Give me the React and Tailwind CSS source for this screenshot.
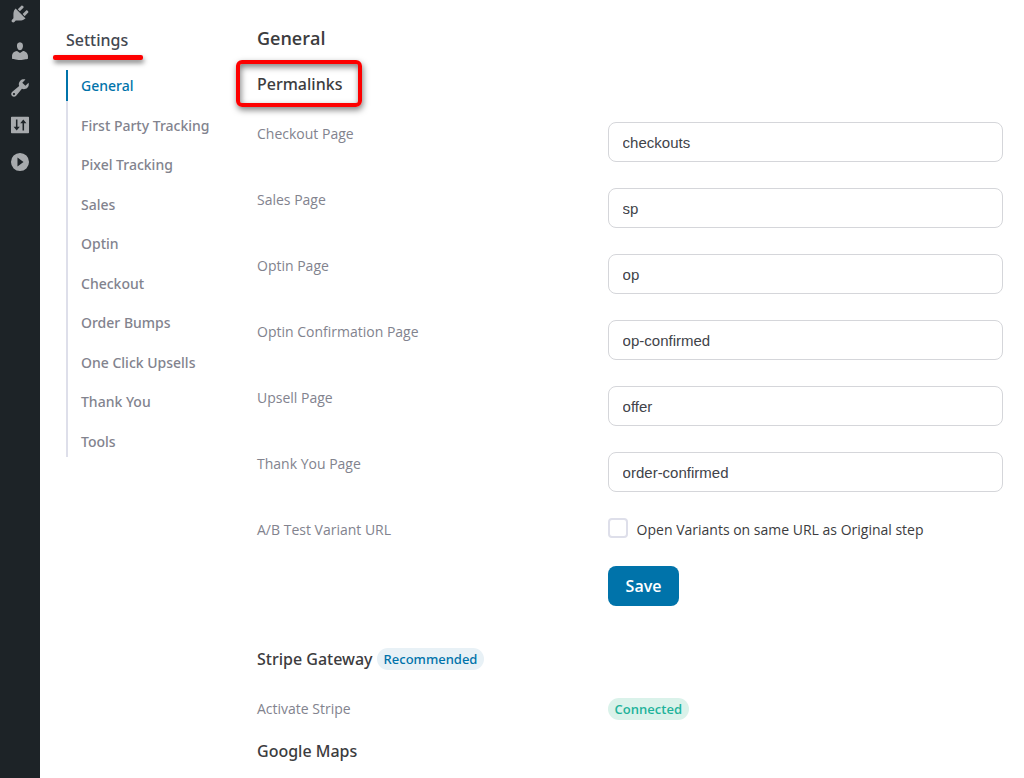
import React, { useState } from 'react';

const ADMIN_MENU = [
  { id: 'plugins', label: 'Plugins', path: 'M13.11 4.36L9.87 7.6 8 5.73l3.24-3.24c.35-.34 1.05-.2 1.56.32.52.51.66 1.21.31 1.55zm-8 1.77l.91-1.12 9.01 9.01-1.19.84c-.71.71-2.63 1.16-3.82 1.16H6.14L4.9 17.26c-.59.59-1.54.59-2.12 0-.59-.58-.59-1.53 0-2.12l1.24-1.24v-3.88c0-1.13.4-3.19 1.09-3.89zm7.26 3.97l3.24-3.24c.34-.35 1.04-.21 1.55.31.52.51.66 1.21.31 1.55l-3.24 3.25z' },
  { id: 'users', label: 'Users', path: 'M10 9.25c-2.27 0-2.73-3.44-2.73-3.44C7 4.02 7.82 2 9.97 2c2.16 0 2.98 2.02 2.71 3.81 0 0-.41 3.44-2.68 3.44zM7.280 10L10 11.820 12.720 10c2.39 0 4.52 2.33 4.52 4.53v2.49s-3.65 1.13-7.24 1.13c-3.65 0-7.24-1.13-7.24-1.13v-2.49c0-2.25 1.94-4.48 4.52-4.53z' },
  { id: 'tools', label: 'Tools', path: 'M16.68 9.77c-1.34 1.34-3.3 1.67-4.95.99l-5.41 6.52c-.99.99-2.59.99-3.58 0s-.99-2.59 0-3.57l6.52-5.42c-.68-1.65-.35-3.61.99-4.95 1.28-1.28 3.12-1.62 4.72-1.06l-2.89 2.89 2.82 2.82 2.86-2.87c.53 1.58.18 3.39-1.08 4.65zM3.81 16.21c.4.39 1.04.39 1.43 0 .4-.4.4-1.04 0-1.43-.39-.4-1.03-.4-1.43 0-.39.39-.39 1.03 0 1.43z' },
  { id: 'settings', label: 'Settings', path: 'M2.5 2.5h15a.7.7 0 0 1 .7.7v13.600a.7.7 0 0 1-.7.7h-15a.7.7 0 0 1-.7-.7V3.200a.7.7 0 0 1 .7-.7zM6.300 5v6.500H4.200L7 15l2.800-3.500H7.700V5zM12.300 15V8.500h-2.100L13 5l2.800 3.500h-2.100V15z' },
  { id: 'collapse', label: 'Collapse menu', path: 'M10 1.8a8.2 8.2 0 1 1 0 16.4 8.2 8.2 0 0 1 0-16.4zM7.7 6v8l5.5-4z' }
];

const TABS = [
  'General',
  'First Party Tracking',
  'Pixel Tracking',
  'Sales',
  'Optin',
  'Checkout',
  'Order Bumps',
  'One Click Upsells',
  'Thank You',
  'Tools'
];

const PERMALINKS = [
  { id: 'checkout', label: 'Checkout Page', value: 'checkouts' },
  { id: 'sales', label: 'Sales Page', value: 'sp' },
  { id: 'optin', label: 'Optin Page', value: 'op' },
  { id: 'optin-confirmation', label: 'Optin Confirmation Page', value: 'op-confirmed' },
  { id: 'upsell', label: 'Upsell Page', value: 'offer' },
  { id: 'thank-you', label: 'Thank You Page', value: 'order-confirmed' }
];

const AdminMenu = () => (
  <nav aria-label="Admin menu" className="w-10 shrink-0 bg-[#1d2327] pt-[3px]">
    <ul className="flex flex-col items-center gap-[15px]">
      {ADMIN_MENU.map(item => (
        <li key={item.id}>
          <a href={`#${item.id}`} aria-label={item.label} className="block text-[#a7aaad]">
            <svg viewBox="0 0 20 20" fill="currentColor" fillRule="evenodd" className="size-[22px]">
              <path d={item.path} />
            </svg>
          </a>
        </li>
      ))}
    </ul>
  </nav>
);

const SettingsTabs = ({ active, onSelect }) => (
  <aside className="w-[217px] shrink-0 pl-[26px] pt-7 font-['Noto_Sans',sans-serif]">
    <h2 className="relative w-fit text-base leading-6 font-medium text-[#434750]">
      Settings
      <span className="absolute top-[27px] -left-[13px] h-[5px] w-[90px] rounded-xs bg-[#fd0000] shadow-[1px_3px_5px_rgba(0,0,0,0.5)]" />
    </h2>
    <ul className="mt-[18px] flex h-[387px] flex-col justify-between border-l-2 border-[#dedfea]">
      {TABS.map(tab => (
        <li key={tab}>
          <a
            href="#settings"
            aria-current={tab === active ? 'page' : undefined}
            onClick={() => onSelect(tab)}
            className={`-ml-0.5 block border-l-2 pl-[13px] text-sm leading-[31px] font-medium ${
              tab === active ? 'border-[#0073aa] text-[#0073aa]' : 'border-transparent text-[#82838e]'
            }`}
          >
            {tab}
          </a>
        </li>
      ))}
    </ul>
  </aside>
);

const Row = ({ label, htmlFor, children }) => (
  <div className="grid grid-cols-[47fr_53fr] items-start">
    {htmlFor ? (
      <label htmlFor={htmlFor} className="text-sm leading-6 text-[#82838e]">{label}</label>
    ) : (
      <span className="text-sm leading-6 text-[#82838e]">{label}</span>
    )}
    {children}
  </div>
);

const App = () => {
  const [active, setActive] = useState('General');
  const [slugs, setSlugs] = useState(() => Object.fromEntries(PERMALINKS.map(p => [p.id, p.value])));
  const [sameUrl, setSameUrl] = useState(false);

  return (
    <div className="flex min-h-screen bg-white font-['Open_Sans',sans-serif] text-[#3c3c3e]">
      <AdminMenu />
      <SettingsTabs active={active} onSelect={setActive} />

      <main className="min-w-0 flex-1 pt-[26px] pr-[21px]">
        <h1 className="text-lg leading-6 font-semibold">General</h1>

        <form onSubmit={e => e.preventDefault()}>
          <h2 className="relative mt-[22px] w-fit font-['Noto_Sans',sans-serif] text-base leading-6 font-medium">
            Permalinks
            <span className="absolute -top-3 -left-[21px] h-[47px] w-[126px] rounded-md border-4 border-[#fd0000] shadow-[1px_3px_6px_rgba(0,0,0,0.5),inset_1px_3px_6px_rgba(0,0,0,0.5)]" />
          </h2>

          <div className="mt-[26px] flex flex-col gap-[26px]">
            {PERMALINKS.map(({ id, label }) => (
              <Row key={id} label={label} htmlFor={id}>
                <input
                  id={id}
                  type="text"
                  value={slugs[id]}
                  onChange={e => setSlugs({ ...slugs, [id]: e.target.value })}
                  className="h-10 w-full rounded-lg border border-[#d5d6da] px-[14px] font-['Liberation_Sans',sans-serif] text-[15px] text-[#414349]"
                />
              </Row>
            ))}
            <Row label="A/B Test Variant URL">
              <label className="flex items-start gap-[9px] text-sm leading-6">
                <input
                  type="checkbox"
                  checked={sameUrl}
                  onChange={e => setSameUrl(e.target.checked)}
                  className="size-5 appearance-none rounded border-2 border-[#dedfea] checked:bg-[#0073aa]"
                />
                Open Variants on same URL as Original step
              </label>
            </Row>
          </div>

          <div className="mt-6 grid grid-cols-[47fr_53fr]">
            <button type="submit" className="col-start-2 h-10 w-fit rounded-lg bg-[#0073aa] px-[18px] text-base font-semibold text-white">
              Save
            </button>
          </div>
        </form>

        <section className="mt-[41px]">
          <h2 className="flex items-center gap-1 font-['Noto_Sans',sans-serif] text-base leading-6 font-medium">
            Stripe Gateway
            <span className="rounded-full bg-[#e8f1f6] px-[7px] text-[13px] leading-[22px] text-[#0073aa]">Recommended</span>
          </h2>
          <div className="mt-[26px]">
            <Row label="Activate Stripe">
              <span className="w-fit self-center rounded-full bg-[#daf2ea] px-[7px] text-[13px] leading-[22px] font-semibold text-[#1fb39b]">Connected</span>
            </Row>
          </div>
        </section>

        <h2 className="mt-[18px] font-['Noto_Sans',sans-serif] text-base leading-6 font-medium">Google Maps</h2>
      </main>
    </div>
  );
};

export default App;
